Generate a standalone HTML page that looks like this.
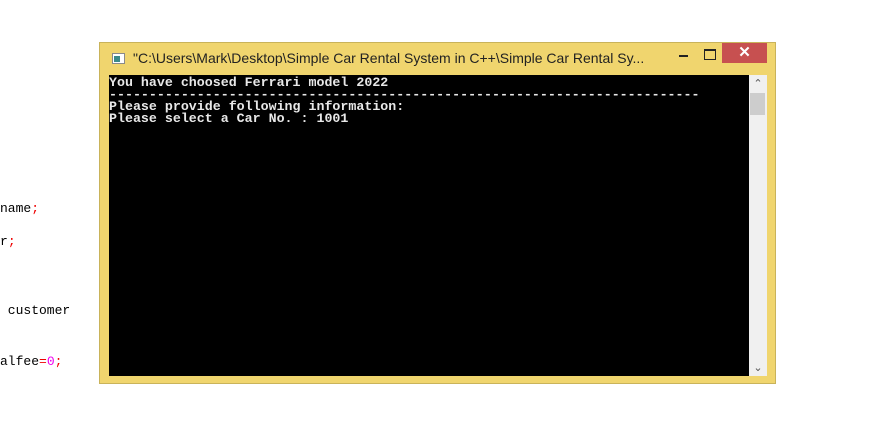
<!DOCTYPE html>
<html><head><meta charset="utf-8"><style>
body{margin:0;width:889px;height:440px;background:#fff;position:relative;overflow:hidden;font-family:"Liberation Sans",sans-serif}
.code{position:absolute;font-family:"Liberation Mono",monospace;font-size:13px;color:#000;white-space:pre;line-height:13px}
.r{color:#e00}.m{color:#e0e}
.win{position:absolute;left:99px;top:42px;width:677px;height:342px;background:#f0d56e;border:1px solid #c9b35a;box-sizing:border-box}
.title{position:absolute;left:33px;top:7px;font-size:14px;color:#222;white-space:nowrap;width:537px;overflow:hidden}
.client{position:absolute;left:9px;top:32px;width:640px;height:301px;background:#000;overflow:hidden}
.txt{position:absolute;left:0;top:2px;font-family:"Liberation Mono",monospace;font-weight:bold;font-size:13.3px;line-height:12px;color:#e8e8e8;white-space:pre}
.sb{position:absolute;left:649px;top:32px;width:18px;height:301px;background:#f0f0f0}
.thumb{position:absolute;left:1px;top:18px;width:15px;height:22px;background:#cdcdcd}
.close{position:absolute;left:622px;top:0px;width:45px;height:20px;background:#c75050;color:#fff;text-align:center;font-size:15px;line-height:20px;font-weight:bold}
</style></head><body>
<div class="code" style="left:0;top:202px">name<span class="r">;</span></div>
<div class="code" style="left:0;top:235px">r<span class="r">;</span></div>
<div class="code" style="left:0;top:304px"> customer</div>
<div class="code" style="left:0;top:355px">alfee<span class="r">=</span><span class="m">0</span><span class="r">;</span></div>
<div class="win">
 <div style="position:absolute;left:12px;top:10px;width:13px;height:11px;background:#fff;border:1px solid #8a8a8a;box-sizing:border-box"><div style="position:absolute;left:1px;top:2px;width:6px;height:6px;background:#3a8a8a"></div></div>
 <div class="title">"C:\Users\Mark\Desktop\Simple Car Rental System in C++\Simple Car Rental Sy...</div>
 <div style="position:absolute;left:579px;top:12px;width:9px;height:2px;background:#222"></div>
 <div style="position:absolute;left:604px;top:6px;width:10px;height:8px;border:1px solid #222;border-top-width:2px"></div>
 <div class="close">✕</div>
 <div class="client"><div class="txt">You have choosed Ferrari model 2022
--------------------------------------------------------------------------
Please provide following information:
Please select a Car No. : 1001</div></div>
 <div class="sb"><div style="position:absolute;top:2px;width:18px;text-align:center;font-size:11px;color:#555">&#8963;</div><div class="thumb"></div><div style="position:absolute;bottom:2px;width:18px;text-align:center;font-size:11px;color:#555">&#8964;</div></div>
</div>
</body></html>
